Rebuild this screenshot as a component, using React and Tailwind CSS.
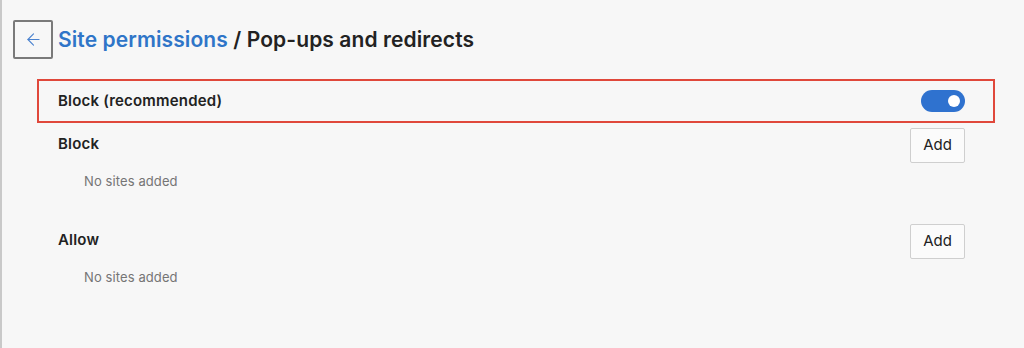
import { ArrowLeft } from "lucide-react";

function Toggle({ on }) {
  return (
    <div
      className={
        "w-[44px] h-[22px] rounded-full flex items-center px-[5px] " +
        (on ? "bg-[#2f72cf] justify-end" : "bg-[#999] justify-start")
      }
    >
      <div className="w-[12px] h-[12px] rounded-full bg-white" />
    </div>
  );
}

function AddButton() {
  return (
    <button className="w-[55px] h-[35px] border-[1.5px] border-[#cfcfcf] bg-[#fbfbfb] text-[15px] text-[#222] rounded-[2px]">
      Add
    </button>
  );
}

function SiteList({ title, className }) {
  return (
    <div className={className}>
      <div className="flex justify-between items-start">
        <div className="pt-[6px] text-[15px] font-semibold text-[#222] leading-[20px] tracking-[0.2px]">
          {title}
        </div>
        <AddButton />
      </div>
      <div className="pl-[26px] mt-[8px] text-[13px] leading-[20px] text-[#757575] tracking-[0.1px]">
        No sites added
      </div>
    </div>
  );
}

export default function App() {
  return (
    <div
      className="w-[1024px] h-[348px] bg-[#f7f7f7] border-l-2 border-[#c9c9c9] overflow-hidden"
      style={{ fontFamily: "Inter, 'Liberation Sans', sans-serif" }}
    >
      <div className="flex items-center pt-[20px] pl-[11px]">
        <button className="w-[40px] h-[39px] border-2 border-[#7a7a7a] rounded-[2px] flex items-center justify-center text-[#4a82cf]">
          <ArrowLeft size={19} strokeWidth={1.4} />
        </button>
        <h1 className="ml-[5px] text-[21px] font-semibold tracking-[0.1px]">
          <span className="text-[#2f75c8]">Site permissions</span>
          <span className="text-[#222]"> / Pop-ups and redirects</span>
        </h1>
      </div>

      <div className="ml-[35px] mt-[20px] w-[958px] h-[44px] border-2 border-[#e0483b] flex items-center justify-between pl-[19px] pr-[28px]">
        <span className="text-[15px] font-semibold text-[#222] tracking-[0.2px]">
          Block (recommended)
        </span>
        <Toggle on />
      </div>

      <div className="pl-[56px] pr-[59px]">
        <SiteList title="Block" className="mt-[5px]" />
        <SiteList title="Allow" className="mt-[33px]" />
      </div>
    </div>
  );
}
